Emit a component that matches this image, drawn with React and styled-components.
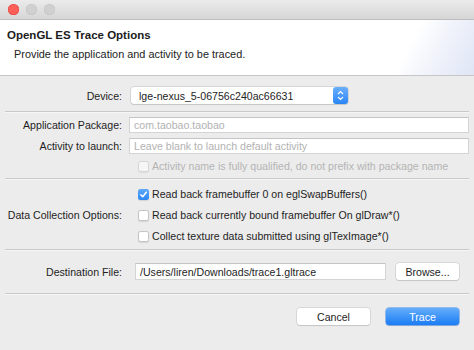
import React from "react";
import styled, { createGlobalStyle } from "styled-components";

const Global = createGlobalStyle`
  html, body {
    margin: 0;
    padding: 0;
    background: #ececec;
  }
  body {
    font-family: "Liberation Sans", Arial, sans-serif;
    color: #222;
  }
`;

const App = () => {
  return (
    <Window>
      <Global />
      <TitleBar>
        <Light color="#fc5f57" border="#e2463f" />
        <Light color="#d0d0d0" border="#c2c2c2" />
        <Light color="#d0d0d0" border="#c2c2c2" />
      </TitleBar>
      <Header>
        <h1>OpenGL ES Trace Options</h1>
        <p>Provide the application and activity to be traced.</p>
      </Header>
      <Body>
        <Section pt={11} pb={7}>
          <Row>
            <Label>Device:</Label>
            <Select>
              <span>lge-nexus_5-06756c240ac66631</span>
              <Stepper>
                <svg width="7" height="11" viewBox="0 0 7 11">
                  <path d="M1 4 L3.5 1.5 L6 4 M1 7 L3.5 9.5 L6 7" fill="none" stroke="#fff" strokeWidth="1.2" />
                </svg>
              </Stepper>
            </Select>
          </Row>
        </Section>
        <Separator />
        <Section pt={5} pb={5} gap={5}>
          <Row>
            <Label>Application Package:</Label>
            <Field offset={7} placeholder>com.taobao.taobao</Field>
          </Row>
          <Row>
            <Label>Activity to launch:</Label>
            <Field offset={7} placeholder>Leave blank to launch default activity</Field>
          </Row>
          <Row>
            <span />
            <Check disabled offset={16}>
              <Box disabled />
              Activity name is fully qualified, do not prefix with package name
            </Check>
          </Row>
        </Section>
        <Separator />
        <Section pt={8} pb={6}>
          <OptionGrid>
            <Label>Data Collection Options:</Label>
            <Checks>
              <Check offset={16}>
                <Box checked>
                  <svg width="9" height="9" viewBox="0 0 9 9">
                    <path d="M1.8 4.8 L3.7 6.7 L7.3 2.2" fill="none" stroke="#fff" strokeWidth="1.5" strokeLinecap="round" strokeLinejoin="round" />
                  </svg>
                </Box>
                Read back framebuffer 0 on eglSwapBuffers()
              </Check>
              <Check offset={16}>
                <Box />
                Read back currently bound framebuffer On glDraw*()
              </Check>
              <Check offset={16}>
                <Box />
                Collect texture data submitted using glTexImage*()
              </Check>
            </Checks>
          </OptionGrid>
        </Section>
        <Separator />
        <Section pt={13} pb={13}>
          <Row>
            <Label>Destination File:</Label>
            <DestRow>
              <Field offset={13} tall>/Users/liren/Downloads/trace1.gltrace</Field>
              <Button width={63}>Browse...</Button>
            </DestRow>
          </Row>
        </Section>
        <Separator />
        <Footer>
          <Button width={73}>Cancel</Button>
          <Button width={73} primary>Trace</Button>
        </Footer>
      </Body>
    </Window>
  );
};

const Window = styled.div`
  width: 474px;
  height: 350px;
  display: flex;
  flex-direction: column;
  overflow: hidden;
  background: #ececec;
`;

const TitleBar = styled.div`
  height: 20px;
  display: flex;
  align-items: center;
  gap: 7px;
  padding-left: 8px;
  box-sizing: border-box;
  background: linear-gradient(#ebebeb, #d6d6d6);
  border-bottom: 1px solid #bdbdbd;
`;

const Light = styled.span`
  width: 11px;
  height: 11px;
  border-radius: 50%;
  background: ${(p) => p.color};
  box-shadow: inset 0 0 0 0.5px ${(p) => p.border};
`;

const Header = styled.div`
  height: 56px;
  box-sizing: border-box;
  padding: 9px 8px 0 7px;
  background: linear-gradient(118deg, #fff 84%, #f2f4fb 90%, #dfe5f6 100%);
  border-bottom: 1px solid #c6c6c6;
  h1 {
    margin: 0;
    font-size: 11.5px;
    font-weight: 700;
    color: #1c1c1c;
  }
  p {
    margin: 7px 0 0 7px;
    font-size: 10.9px;
    color: #1c1c1c;
  }
`;

const Body = styled.div`
  flex: 1;
  display: flex;
  flex-direction: column;
  padding: 0 5px;
  font-size: 10.6px;
`;

const Section = styled.div`
  display: flex;
  flex-direction: column;
  gap: ${(p) => p.gap || 0}px;
  padding: ${(p) => p.pt}px 0 ${(p) => p.pb}px;
`;

const Separator = styled.div`
  height: 1px;
  background: #c9c9c9;
  box-shadow: 0 1px 0 #f6f6f6;
`;

const Row = styled.div`
  display: grid;
  grid-template-columns: 117px 1fr;
  align-items: center;
`;

const Label = styled.span`
  text-align: right;
  color: #1e1e1e;
  white-space: nowrap;
`;

const Select = styled.div`
  margin-left: 9px;
  width: 217px;
  height: 17px;
  box-sizing: border-box;
  display: flex;
  align-items: center;
  justify-content: space-between;
  background: #fff;
  border-radius: 3px;
  box-shadow: 0 0 0 0.5px #bfbfbf, 0 1px 1px rgba(0, 0, 0, 0.12);
  padding-left: 8px;
  font-size: 10.6px;
  color: #1e1e1e;
`;

const Stepper = styled.span`
  width: 15px;
  height: 17px;
  border-radius: 3px;
  display: flex;
  align-items: center;
  justify-content: center;
  background: linear-gradient(#6aaefc, #2a86f6);
`;

const Field = styled.div`
  margin-left: ${(p) => p.offset}px;
  flex: 1;
  height: ${(p) => (p.tall ? 17 : 16)}px;
  box-sizing: border-box;
  display: flex;
  align-items: center;
  padding-left: 4px;
  background: #fff;
  border: 1px solid #d4d4d4;
  border-top-color: #c4c4c4;
  color: ${(p) => (p.placeholder ? "#b2b2b2" : "#1e1e1e")};
  white-space: nowrap;
  overflow: hidden;
`;

const Check = styled.div`
  margin-left: ${(p) => p.offset}px;
  height: 14px;
  display: flex;
  align-items: center;
  gap: 3px;
  color: ${(p) => (p.disabled ? "#b4b4b4" : "#1e1e1e")};
  white-space: nowrap;
`;

const Box = styled.span`
  width: 11px;
  height: 11px;
  flex-shrink: 0;
  box-sizing: border-box;
  border-radius: 2.5px;
  display: flex;
  align-items: center;
  justify-content: center;
  background: ${(p) => (p.checked ? "linear-gradient(#5ea9fb, #2c86f5)" : "#fff")};
  border: ${(p) => (p.checked ? "none" : "1px solid #c4c4c4")};
  opacity: ${(p) => (p.disabled ? 0.55 : 1)};
  box-shadow: 0 0.5px 1px rgba(0, 0, 0, 0.1);
`;

const OptionGrid = styled.div`
  display: grid;
  grid-template-columns: 117px 1fr;
  align-items: center;
`;

const Checks = styled.div`
  display: flex;
  flex-direction: column;
  gap: 7px;
`;

const DestRow = styled.div`
  display: flex;
  align-items: center;
  gap: 10px;
  padding-right: 10px;
`;

const Button = styled.button`
  width: ${(p) => p.width}px;
  height: 17px;
  padding: 0;
  border: none;
  border-radius: 3px;
  font-family: "Liberation Sans", Arial, sans-serif;
  font-size: 10.6px;
  color: ${(p) => (p.primary ? "#fff" : "#1e1e1e")};
  background: ${(p) => (p.primary ? "linear-gradient(#64adfb, #1b7cf4)" : "#fff")};
  box-shadow: ${(p) =>
    p.primary
      ? "0 0 0 0.5px #3a86e8, 0 1px 1px rgba(0,0,0,0.15)"
      : "0 0 0 0.5px #c4c4c4, 0 1px 1px rgba(0,0,0,0.15)"};
`;

const Footer = styled.div`
  display: flex;
  justify-content: flex-end;
  gap: 16px;
  padding: 14px 10px 0 0;
`;

export default App;
